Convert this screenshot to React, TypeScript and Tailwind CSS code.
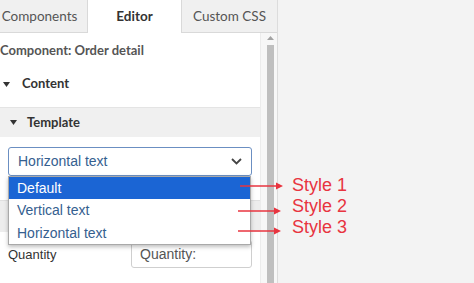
import React from 'react';

const lato = { fontFamily: 'Lato, "Open Sans", sans-serif' };
const arial = { fontFamily: '"Liberation Sans", Arial, sans-serif' };

const Caret: React.FC<{ className?: string }> = ({ className }) => (
    <svg className={className} width="7" height="5" viewBox="0 0 7 5">
        <path d="M0 0 L7 0 L3.5 5 Z" fill="#333" />
    </svg>
);

const Arrow: React.FC<{ x1: number; x2: number; y: number }> = ({ x1, x2, y }) => (
    <g>
        <line x1={x1} y1={y} x2={x2 - 5} y2={y} stroke="#e8343f" strokeWidth={1.6} />
        <path d={`M${x2 - 7} ${y - 3.5} L${x2} ${y} L${x2 - 7} ${y + 3.5} Z`} fill="#e8343f" />
    </g>
);

const App: React.FC = () => {
    return (
        <div className="relative flex w-[474px] h-[283px] overflow-hidden bg-[#f3f3f3]">
            {/* left editor panel */}
            <div className="flex flex-col w-[278px] h-full bg-white border-r border-[#dcdcdc]">
                <div className="flex h-[33px] text-[13.5px]" style={lato}>
                    <div className="w-[88px] flex items-center justify-center pr-[8px] bg-[#f0f0f0] border-r border-b border-[#d9d9d9] text-[#555]">
                        Components
                    </div>
                    <div className="w-[93px] flex items-center justify-center bg-white font-bold text-[#333]">
                        Editor
                    </div>
                    <div className="flex-1 flex items-center justify-center bg-[#f0f0f0] border-l border-b border-[#d9d9d9] text-[#555]">
                        Custom CSS
                    </div>
                </div>

                <div className="flex flex-1">
                    <div className="w-[261px] flex flex-col border-r border-[#ececec]" style={lato}>
                        <div className="h-[36px] flex items-center text-[13px] font-bold text-[#555]">
                            Component: Order detail
                        </div>
                        <div className="h-[30px] flex items-center gap-[12px] pl-[3px] text-[13px] font-bold text-[#333]">
                            <Caret />
                            <span>Content</span>
                        </div>
                        <div className="mt-[8px] h-[30px] flex items-center gap-[10px] pl-[10px] bg-[#f0f0f0] border-t border-[#e4e4e4] text-[13px] font-bold text-[#333]">
                            <Caret />
                            <span>Template</span>
                        </div>

                        <div className="relative pt-[10px] px-[8px]" style={arial}>
                            <div className="h-[29px] flex items-center justify-between pl-[9px] pr-[9px] border border-[#6b8fc2] rounded-[3px] bg-white text-[14px] text-[#35608f]">
                                <span>Horizontal text</span>
                                <svg width="11" height="7" viewBox="0 0 11 7">
                                    <path d="M1 1 L5.5 5.5 L10 1" fill="none" stroke="#444" strokeWidth={1.8} />
                                </svg>
                            </div>

                            {/* open option list */}
                            <div className="absolute left-[8px] top-[39px] w-[243px] z-10 bg-white border border-[#a9a9a9] shadow-[0_2px_4px_rgba(0,0,0,0.25)] text-[14px]">
                                <div className="h-[22px] flex items-center pl-[8px] bg-[#1b65d4] text-white">Default</div>
                                <div className="h-[23px] flex items-center pl-[8px] text-[#35608f]">Vertical text</div>
                                <div className="h-[22px] flex items-center pl-[8px] text-[#35608f]">Horizontal text</div>
                            </div>
                        </div>

                        <div className="mt-[24px] h-[32px] bg-[#ededed] border-t border-[#e0e0e0]"></div>

                        <div className="mt-[8px] flex items-start justify-between px-[8px]" style={arial}>
                            <span className="pt-[5px] text-[13px] text-[#333]">Quantity</span>
                            <div className="w-[121px] h-[28px] flex items-center pl-[8px] border border-[#cfcfcf] rounded-[3px] text-[14px] text-[#555]">
                                Quantity:
                            </div>
                        </div>
                    </div>

                    {/* scrollbar */}
                    <div className="flex-1 flex flex-col items-center bg-[#f7f7f7] pt-[3px] pl-[2px]">
                        <svg width="7" height="4" viewBox="0 0 7 4">
                            <path d="M0 4 L3.5 0 L7 4 Z" fill="#a3a3a3" />
                        </svg>
                        <div className="mt-[5px] w-[7px] flex-1 bg-[#bfbfbf]"></div>
                    </div>
                </div>
            </div>

            <div className="flex-1"></div>

            {/* annotations */}
            <svg className="absolute left-0 top-0 z-20 pointer-events-none" width="474" height="283">
                <Arrow x1={240} x2={283} y={186} />
                <Arrow x1={238} x2={281} y={211} />
                <Arrow x1={238} x2={281} y={231} />
            </svg>
            <div className="absolute left-[292px] top-[175px] z-20 flex flex-col text-[18px] leading-[21px] text-[#e8343f]" style={arial}>
                <span>Style 1</span>
                <span>Style 2</span>
                <span>Style 3</span>
            </div>
        </div>
    );
};

export default App;
